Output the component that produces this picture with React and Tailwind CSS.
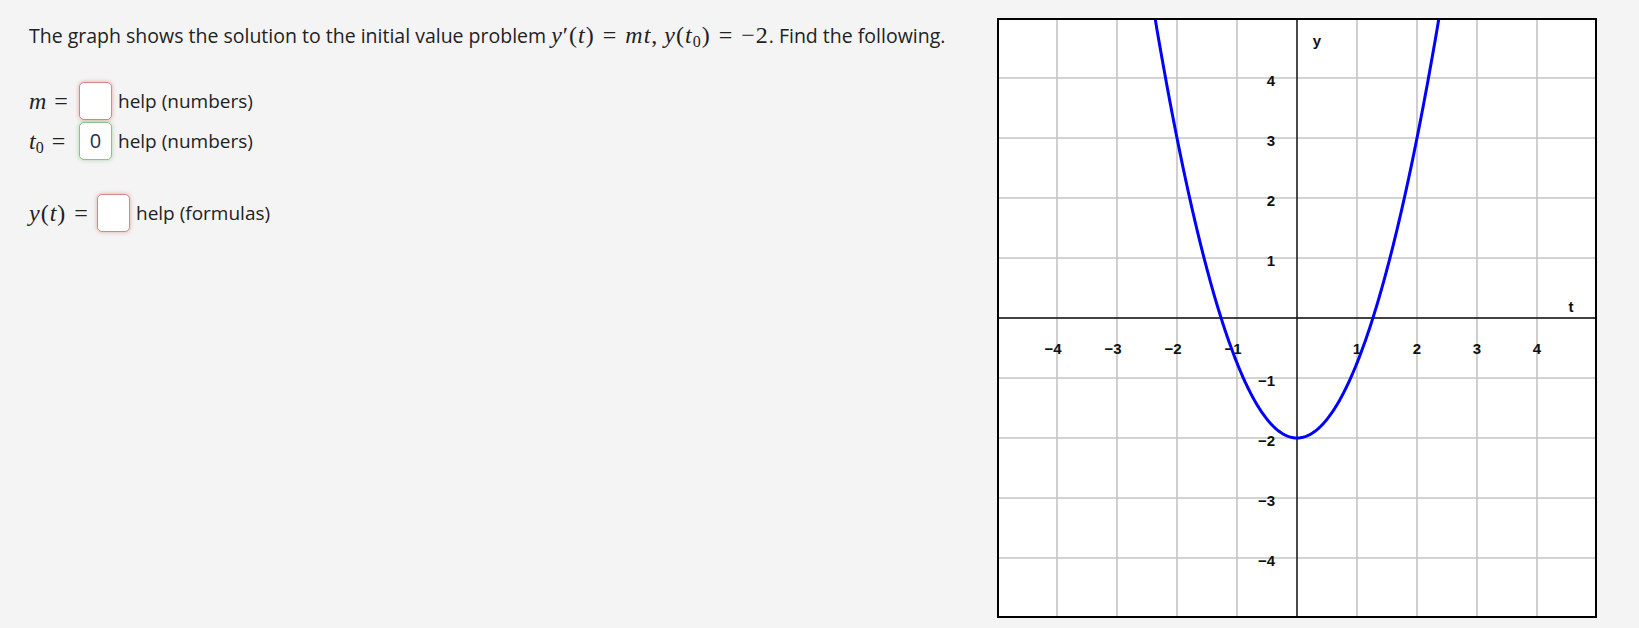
import React from 'react';

const mathFont = "font-['Liberation_Serif','DejaVu_Serif',serif]";

function Eq() {
  return <span className="mx-[8px] not-italic">=</span>;
}

function AnswerBox({ value, ok }) {
  return (
    <div
      className={`w-[33px] h-[38px] rounded-[5px] bg-white border flex items-center justify-center text-[20px] text-[#1f2f4f] ${
        ok
          ? 'border-[#8cc08c] shadow-[0_0_4px_rgba(80,170,80,0.45)]'
          : 'border-[#d48888] shadow-[0_0_4px_rgba(200,70,70,0.45)]'
      }`}
    >
      {value}
    </div>
  );
}

const SIZE = 600;
const UNIT = 60;

function toPx(t, y) {
  return [SIZE / 2 + t * UNIT, SIZE / 2 - y * UNIT];
}

function curvePath() {
  const pts = [];
  for (let i = 0; i <= 400; i++) {
    const t = -2.45 + (4.9 * i) / 400;
    const y = 1.25 * t * t - 2;
    const [x, py] = toPx(t, y);
    pts.push(`${i === 0 ? 'M' : 'L'}${x.toFixed(2)},${py.toFixed(2)}`);
  }
  return pts.join(' ');
}

function Graph() {
  const ticks = [-4, -3, -2, -1, 1, 2, 3, 4];
  const grid = [1, 2, 3, 4, 5, 6, 7, 8, 9];
  return (
    <svg width="600" height="600" viewBox="0 0 600 600" className="block bg-white">
      <defs>
        <clipPath id="box">
          <rect x="0" y="0" width="600" height="600" />
        </clipPath>
      </defs>
      {grid.map((g) => (
        <g key={g}>
          <line x1={g * UNIT} y1="0" x2={g * UNIT} y2="600" stroke="#c4c4c4" strokeWidth="1.6" />
          <line x1="0" y1={g * UNIT} x2="600" y2={g * UNIT} stroke="#c4c4c4" strokeWidth="1.6" />
        </g>
      ))}
      <line x1="300" y1="0" x2="300" y2="600" stroke="#111" strokeWidth="1.4" />
      <line x1="0" y1="300" x2="600" y2="300" stroke="#111" strokeWidth="1.4" />
      <g fontFamily="'Liberation Sans', Arial, sans-serif" fontWeight="700" fontSize="15" fill="#111">
        {ticks.map((t) => (
          <text key={`x${t}`} x={300 + t * UNIT - (t < 0 ? 4 : 0)} y="336" textAnchor="middle">
            {t < 0 ? `\u2212${-t}` : t}
          </text>
        ))}
        {ticks.map((t) => (
          <text key={`y${t}`} x="278" y={300 - t * UNIT + 8} textAnchor="end">
            {t < 0 ? `\u2212${-t}` : t}
          </text>
        ))}
        <text x="320" y="28" textAnchor="middle">y</text>
        <text x="574" y="294" textAnchor="middle">t</text>
      </g>
      <path d={curvePath()} fill="none" stroke="#0000ff" strokeWidth="3" clipPath="url(#box)" />
      <rect x="1" y="1" width="598" height="598" fill="none" stroke="#000" strokeWidth="2" />
    </svg>
  );
}

export default function App() {
  return (
    <div className="w-full h-[628px] bg-[#f4f4f4] flex font-['Open_Sans','Noto_Sans',sans-serif] text-[#222]">
      <div className="w-[997px] shrink-0 pl-[29px] pt-[21px] text-[19px] leading-[28px]">
        <p className="whitespace-nowrap text-[19.5px]">
          The graph shows the solution to the initial value problem{' '}
          <span className={`${mathFont} text-[24px] tracking-[1px]`}>
            <i>y</i>′(<i>t</i>)<Eq /><i>mt</i>,<span className="ml-[6px]" /><i>y</i>(<i>t</i>
            <sub className="text-[16px]">0</sub>)<Eq />−2
          </span>
          . Find the following.
        </p>

        <div className="mt-[32px] flex items-center">
          <span className={`${mathFont} text-[24px] w-[50px]`}>
            <i>m</i><Eq />
          </span>
          <AnswerBox />
          <span className="ml-[6px]">help (numbers)</span>
        </div>
        <div className="mt-[2px] flex items-center">
          <span className={`${mathFont} text-[24px] w-[50px]`}>
            <i>t</i><sub className="text-[16px]">0</sub><Eq />
          </span>
          <AnswerBox value="0" ok />
          <span className="ml-[6px]">help (numbers)</span>
        </div>

        <div className="mt-[34px] flex items-center">
          <span className={`${mathFont} text-[24px] w-[68px] tracking-[1px]`}>
            <i>y</i>(<i>t</i>)<Eq />
          </span>
          <AnswerBox />
          <span className="ml-[6px]">help (formulas)</span>
        </div>
      </div>
      <div className="pt-[18px]">
        <Graph />
      </div>
    </div>
  );
}
